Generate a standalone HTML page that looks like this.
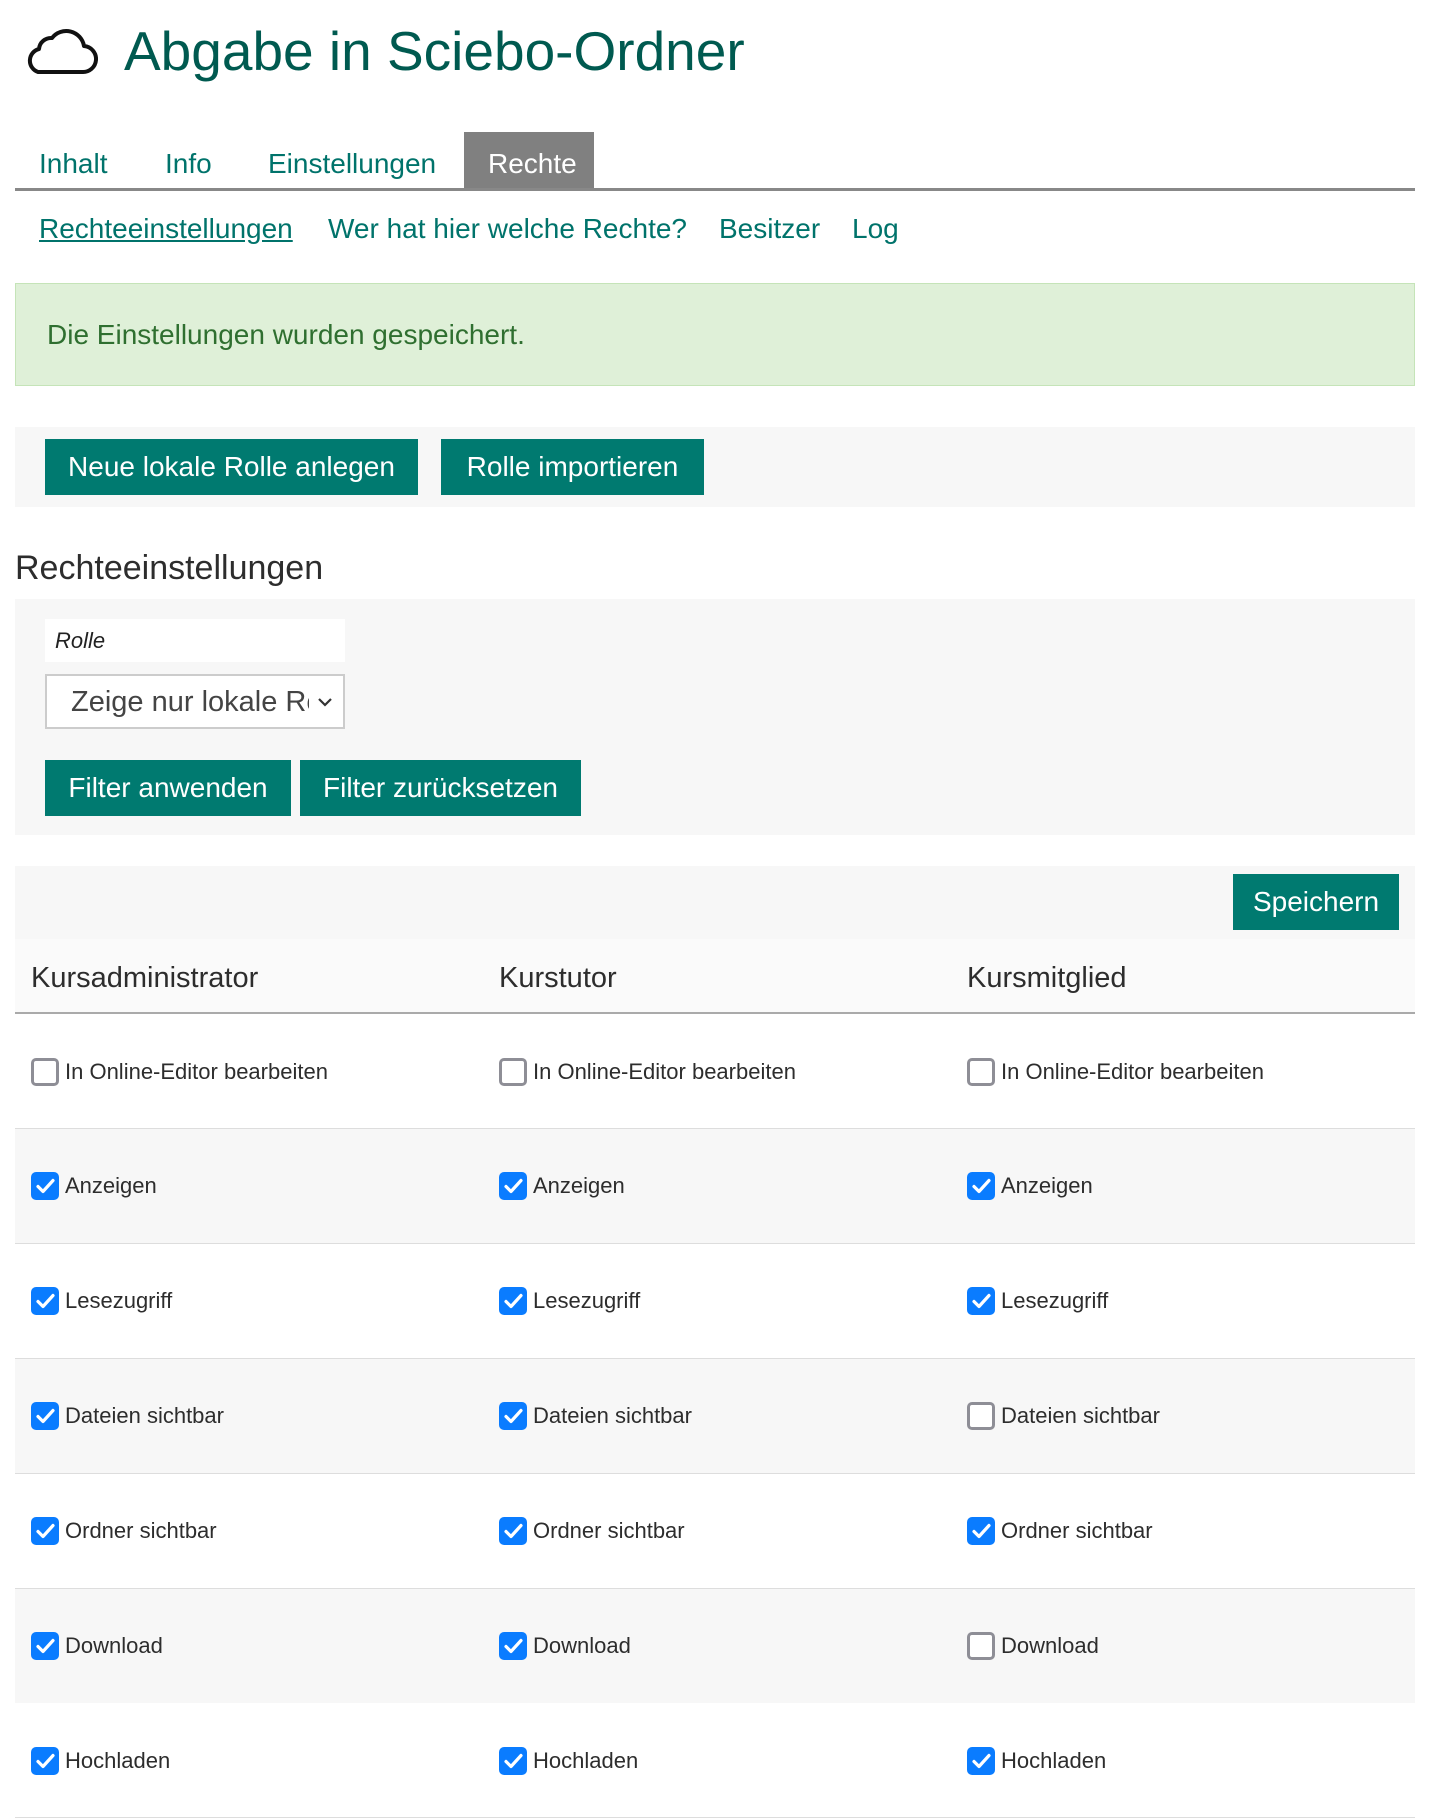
<!DOCTYPE html>
<html><head><meta charset="utf-8"><style>
*{box-sizing:border-box;margin:0;padding:0}
body{width:1434px;height:1802px;overflow:hidden;background:#fff;font-family:"Liberation Sans",sans-serif;color:#333;position:relative}
.a{position:absolute;white-space:nowrap}
.teal{color:#00736b}
.btn{position:absolute;background:#007a70;color:#fff;font-size:28px;display:flex;align-items:center;justify-content:center}
.panel{position:absolute;left:15px;width:1400px;background:#f7f7f7}
.row{position:absolute;left:15px;width:1400px;height:115px;border-bottom:1px solid #ddd}
.cell{position:absolute;top:0;height:115px;display:flex;align-items:center;font-size:22px;color:#2d2d2d}
.cb{width:28px;height:28px;border-radius:5px;margin-right:6px;flex:none}
.on{background:#0a7cff;display:flex;align-items:center;justify-content:center}
.off{border:3px solid #8e8e96;background:#fff}
</style></head><body>
<svg class="a" style="left:22px;top:28px" width="76" height="48" viewBox="0 0 76 48"><path d="M16 44 H60 A13 13 0 0 0 62 18 A18 18 0 0 0 30 10 A12 12 0 0 0 17 21 A12 12 0 0 0 16 44 Z" fill="none" stroke="#111" stroke-width="4" stroke-linejoin="round"/></svg>
<div class="a teal" style="left:124px;top:19px;font-size:55px;color:#005a50">Abgabe in Sciebo-Ordner</div>
<div class="a" style="left:464px;top:132px;width:130px;height:56px;background:#808080"></div>
<div class="a teal" style="left:39px;top:148px;font-size:28px">Inhalt</div>
<div class="a teal" style="left:165px;top:148px;font-size:28px">Info</div>
<div class="a teal" style="left:268px;top:148px;font-size:28px">Einstellungen</div>
<div class="a" style="left:488px;top:148px;font-size:28px;color:#fff">Rechte</div>
<div class="a" style="left:15px;top:188px;width:1400px;height:3px;background:#888"></div>
<div class="a teal" style="left:39px;top:213px;font-size:28px;text-decoration:underline">Rechteeinstellungen</div>
<div class="a teal" style="left:328px;top:213px;font-size:28px">Wer hat hier welche Rechte?</div>
<div class="a teal" style="left:719px;top:213px;font-size:28px">Besitzer</div>
<div class="a teal" style="left:852px;top:213px;font-size:28px">Log</div>
<div class="a" style="left:15px;top:283px;width:1400px;height:103px;background:#dff0d8;border:1px solid #c5e4b8"></div>
<div class="a" style="left:47px;top:319px;font-size:28px;color:#2f6f30">Die Einstellungen wurden gespeichert.</div>
<div class="panel" style="top:427px;height:80px"></div>
<div class="btn" style="left:45px;top:439px;width:373px;height:56px">Neue lokale Rolle anlegen</div>
<div class="btn" style="left:441px;top:439px;width:263px;height:56px">Rolle importieren</div>
<div class="a" style="left:15px;top:549px;font-size:34px;color:#2d2d2d">Rechteeinstellungen</div>
<div class="panel" style="top:599px;height:236px"></div>
<div class="a" style="left:45px;top:619px;width:300px;height:43px;background:#fff"></div>
<div class="a" style="left:55px;top:628px;font-size:22px;font-style:italic;color:#222">Rolle</div>
<div class="a" style="left:45px;top:674px;width:300px;height:55px;background:#fff;border:2px solid #ccc;overflow:hidden"><span style="position:absolute;left:24px;top:10px;font-size:29px;color:#444">Zeige nur lokale Ro</span><span style="position:absolute;right:0;top:0;width:34px;height:51px;background:#fff"></span><svg style="position:absolute;right:10px;top:20px" width="16" height="12" viewBox="0 0 16 12"><path d="M2 3 L8 9 L14 3" fill="none" stroke="#333" stroke-width="2.2"/></svg></div>
<div class="btn" style="left:45px;top:760px;width:246px;height:56px">Filter anwenden</div>
<div class="btn" style="left:300px;top:760px;width:281px;height:56px">Filter zurücksetzen</div>
<div class="panel" style="top:866px;height:73px"></div>
<div class="a" style="left:15px;top:939px;width:1400px;height:74px;background:#fafafa"></div>
<div class="btn" style="left:1233px;top:874px;width:166px;height:56px">Speichern</div>
<div class="a" style="left:15px;top:1012px;width:1400px;height:2px;background:#aaa"></div>
<div class="a" style="left:31px;top:962px;font-size:29px;color:#2d2d2d">Kursadministrator</div>
<div class="a" style="left:499px;top:962px;font-size:29px;color:#2d2d2d">Kurstutor</div>
<div class="a" style="left:967px;top:962px;font-size:29px;color:#2d2d2d">Kursmitglied</div>
<div id="rows"></div>
<script>
var rows=[["In Online-Editor bearbeiten",0,0,0],["Anzeigen",1,1,1],["Lesezugriff",1,1,1],["Dateien sichtbar",1,1,0],["Ordner sichtbar",1,1,1],["Download",1,1,0],["Hochladen",1,1,1]];
var chk='<svg width="19" height="16" viewBox="0 0 19 16"><path d="M2 8.5 L7 13.5 L17 2.5" fill="none" stroke="#fff" stroke-width="3.2" stroke-linecap="round" stroke-linejoin="round"/></svg>';
var h='';rows.forEach(function(r,i){var t=1014+i*114.9;h+='<div class="row" style="top:'+t+'px;background:'+(i%2?'#f7f7f7':'#fff')+'">';[0,1,2].forEach(function(c){h+='<div class="cell" style="left:'+(16+c*468)+'px">'+(r[c+1]?'<span class="cb on">'+chk+'</span>':'<span class="cb off"></span>')+r[0]+'</div>'});h+='</div>'});document.getElementById('rows').innerHTML=h;
</script>
</body></html>
